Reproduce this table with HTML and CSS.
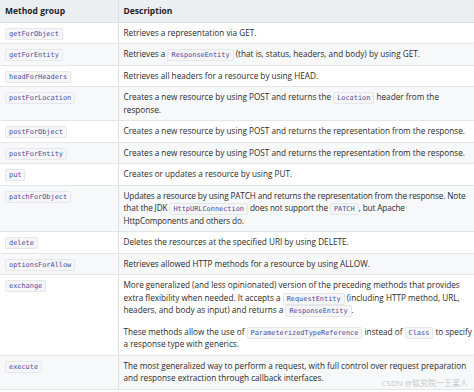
FILE: index.html
```html
<!DOCTYPE html>
<html lang="en">
<head>
<meta charset="UTF-8" />
<title>RestTemplate methods</title>
<link rel="stylesheet" href="styles.css">
</head>
<body>

<table class="methods">
    <tr>
        <th class="col-method">Method group</th>
        <th>Description</th>
    </tr>
    <tr>
        <td><code>getForObject</code></td>
        <td>Retrieves a representation via GET.</td>
    </tr>
    <tr>
        <td><code>getForEntity</code></td>
        <td>Retrieves a <code>ResponseEntity</code> (that is, status, headers, and body) by using GET.</td>
    </tr>
    <tr>
        <td><code>headForHeaders</code></td>
        <td>Retrieves all headers for a resource by using HEAD.</td>
    </tr>
    <tr>
        <td><code>postForLocation</code></td>
        <td>Creates a new resource by using POST and returns the <code>Location</code> header from the response.</td>
    </tr>
    <tr>
        <td><code>postForObject</code></td>
        <td>Creates a new resource by using POST and returns the representation from the response.</td>
    </tr>
    <tr>
        <td><code>postForEntity</code></td>
        <td>Creates a new resource by using POST and returns the representation from the response.</td>
    </tr>
    <tr>
        <td><code>put</code></td>
        <td>Creates or updates a resource by using PUT.</td>
    </tr>
    <tr>
        <td><code>patchForObject</code></td>
        <td class="tight">Updates a resource by using PATCH and returns the representation from the response. Note that the JDK <code>HttpURLConnection</code> does not support the <code>PATCH</code>, but Apache<br>HttpComponents and others do.</td>
    </tr>
    <tr>
        <td><code>delete</code></td>
        <td>Deletes the resources at the specified URI by using DELETE.</td>
    </tr>
    <tr>
        <td><code>optionsForAllow</code></td>
        <td>Retrieves allowed HTTP methods for a resource by using ALLOW.</td>
    </tr>
    <tr>
        <td><code>exchange</code></td>
        <td>
            <p>More generalized (and less opinionated) version of the preceding methods that provides extra flexibility when needed. It accepts a <code>RequestEntity</code> (including HTTP method, URL, headers, and body as input) and returns a <code>ResponseEntity</code>.</p>
            <p>These methods allow the use of <code>ParameterizedTypeReference</code> instead of <code>Class</code> to specify a response type with generics.</p>
        </td>
    </tr>
    <tr>
        <td><code>execute</code></td>
        <td>The most generalized way to perform a request, with full control over request preparation and response extraction through callback interfaces.</td>
    </tr>
</table>

<div class="watermark">CSDN @软究院一王某人</div>

</body>
</html>
```

FILE: styles.css
```css
*{
    margin:0;
    padding:0;
    box-sizing:border-box;
}

body{
    font-family:"Open Sans","Noto Sans CJK SC",sans-serif;
    font-size:8.2px;
    color:#2b2b2b;
    background:#fff;
    overflow:hidden;
}

.methods{
    width:100%;
    border-collapse:collapse;
    line-height:12.5px;
}

.methods th{
    text-align:left;
    font-weight:700;
    font-size:8.5px;
    color:#222;
    background:#eceff1;
    padding:5px 5px 4px;
    border-bottom:1px solid #dde1e4;
}

.col-method{
    width:118px;
}

.methods td{
    vertical-align:top;
    padding:4px 1px 4px 5px;
    border-bottom:1px solid #e3e6e8;
}

.methods td.tight{
    letter-spacing:-0.12px;
}

.methods th:first-child,
.methods td:first-child{
    border-right:1px solid #dcdfe2;
}

.methods tr:nth-child(odd) td{
    background:#f7f8f9;
}

.methods p + p{
    margin-top:9px;
}

code{
    font-family:"DejaVu Sans Mono",monospace;
    font-size:6.9px;
    line-height:1;
    letter-spacing:0;
    color:#4a4aa0;
    background:#f6f6f8;
    border:1px solid #e6e7ea;
    border-radius:2px;
    padding:1px 3px;
}

.watermark{
    position:absolute;
    right:6px;
    bottom:4px;
    font-size:8px;
    color:rgba(150,150,150,0.55);
}
```
